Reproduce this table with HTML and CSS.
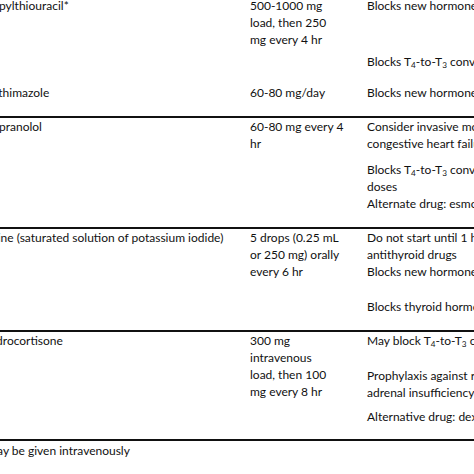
FILE: index.html
```html
<!DOCTYPE html>
<html>
<head>
<meta charset="utf-8">
<link rel="stylesheet" href="styles.css">
</head>
<body>
<div class="page">
  <table class="drugs">
    <colgroup>
      <col class="c-drug">
      <col class="c-dose">
      <col class="c-note">
    </colgroup>
    <tbody>
      <tr class="r-first">
        <td>Propylthiouracil*</td>
        <td>500-1000 mg<br>load, then 250<br>mg every 4 hr</td>
        <td class="note">
          <p>Blocks new hormone synthesis</p>
          <p class="gap-xl">Blocks T<sub>4</sub>-to-T<sub>3</sub> conversion</p>
        </td>
      </tr>
      <tr>
        <td>Methimazole</td>
        <td>60-80 mg/day</td>
        <td class="note"><p>Blocks new hormone synthesis</p></td>
      </tr>
      <tr class="ruled">
        <td>Propranolol</td>
        <td>60-80 mg every 4<br>hr</td>
        <td class="note">
          <p>Consider invasive monitoring in<br>congestive heart failure patients</p>
          <p class="gap-m">Blocks T<sub>4</sub>-to-T<sub>3</sub> conversion in high<br>doses</p>
          <p>Alternate drug: esmolol infusion</p>
        </td>
      </tr>
      <tr class="ruled">
        <td>Iodine (saturated solution of potassium iodide)</td>
        <td>5 drops (0.25 mL<br>or 250 mg) orally<br>every 6 hr</td>
        <td class="note">
          <p>Do not start until 1 hr after<br>antithyroid drugs</p>
          <p>Blocks new hormone synthesis</p>
          <p class="gap-l">Blocks thyroid hormone release</p>
        </td>
      </tr>
      <tr class="ruled last">
        <td>Hydrocortisone</td>
        <td>300 mg<br>intravenous<br>load, then 100<br>mg every 8 hr</td>
        <td class="note">
          <p>May block T<sub>4</sub>-to-T<sub>3</sub> conversion</p>
          <p class="gap-l">Prophylaxis against relative<br>adrenal insufficiency</p>
          <p class="gap-s">Alternative drug: dexamethasone</p>
        </td>
      </tr>
    </tbody>
  </table>
  <p class="footnote">*May be given intravenously</p>
</div>
</body>
</html>
```

FILE: styles.css
```css
html, body {
  margin: 0;
  padding: 0;
  background: #ffffff;
}

.page {
  width: 474px;
  height: 474px;
  overflow: hidden;
  font-family: Lato, "Liberation Sans", sans-serif;
  font-size: 12px;
  line-height: 17px;
  color: #111111;
}

.drugs {
  border-collapse: collapse;
  table-layout: fixed;
  width: 720px;
  margin-left: -25px;
  margin-top: -3px;
}

.c-drug { width: 269px; }
.c-dose { width: 117px; }
.c-note { width: 334px; }

.drugs td {
  vertical-align: top;
  padding: 0 6px 14.5px 6px;
  white-space: nowrap;
}

.drugs tr.r-first td {
  padding-bottom: 14px;
}

.drugs tr.ruled td {
  border-top: 2px solid #111111;
  padding-top: 0.5px;
}

.drugs tr.last td {
  border-bottom: 2px solid #111111;
  padding-bottom: 13.5px;
}

.note p {
  margin: 0;
}

.note .gap-s { margin-top: 7px; }
.note .gap-m { margin-top: 9px; }
.note .gap-l { margin-top: 18px; }
.note .gap-xl { margin-top: 39px; }

sub {
  font-size: 0.68em;
  line-height: 0;
  vertical-align: -0.2em;
}

.footnote {
  margin: 0 0 0 -19px;
  padding-top: 1.5px;
  white-space: nowrap;
}
```
